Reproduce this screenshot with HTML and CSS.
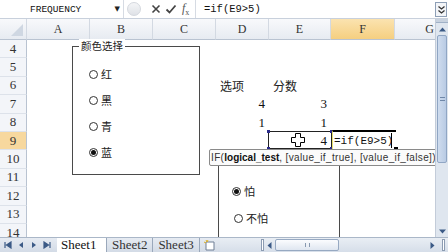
FILE: index.html
```html
<!DOCTYPE html>
<html>
<head>
<meta charset="utf-8">
<link rel="stylesheet" href="styles.css">
</head>
<body>
<div class="app">
  <div class="fbar">
    <div class="namebox"><span class="name">FREQUENCY</span><span class="dd">&#9660;</span></div>
    <div class="fbtns">
      <span class="knob"></span>
      <svg class="ico" width="12" height="12" viewBox="0 0 12 12"><path d="M2.5 2.5 L9.5 9.5 M9.5 2.5 L2.5 9.5" stroke="#444" stroke-width="1.6" fill="none"/></svg>
      <svg class="ico" width="12" height="12" viewBox="0 0 12 12"><path d="M1.5 6.5 L4.5 9.5 L10.5 2.5" stroke="#444" stroke-width="1.8" fill="none"/></svg>
      <span class="fx"><i>f</i><sub>x</sub></span>
    </div>
    <div class="formula">=if(E9&gt;5)</div>
    <div class="expand"><svg width="9" height="10" viewBox="0 0 9 10"><path d="M1.5 1.5 L4.5 4 L7.5 1.5 M1.5 5.5 L4.5 8 L7.5 5.5" stroke="#333" stroke-width="1.3" fill="none"/></svg></div>
  </div>
  <div class="main">
    <div class="sheet">
      <div class="grid">
        <div class="ch corner"><span class="tri"></span></div><div class="ch">A</div><div class="ch">B</div><div class="ch">C</div><div class="ch">D</div><div class="ch">E</div><div class="ch sel">F</div><div class="ch">G</div>
        <div class="rh">4</div><div class="c"></div><div class="c"></div><div class="c"></div><div class="c"></div><div class="c"></div><div class="c"></div><div class="c"></div>
        <div class="rh">5</div><div class="c"></div><div class="c"></div><div class="c"></div><div class="c"></div><div class="c"></div><div class="c"></div><div class="c"></div>
        <div class="rh">6</div><div class="c"></div><div class="c"></div><div class="c"></div><div class="c t">选项</div><div class="c t">分数</div><div class="c"></div><div class="c"></div>
        <div class="rh">7</div><div class="c"></div><div class="c"></div><div class="c"></div><div class="c n">4</div><div class="c n">3</div><div class="c"></div><div class="c"></div>
        <div class="rh">8</div><div class="c"></div><div class="c"></div><div class="c"></div><div class="c n">1</div><div class="c n">1</div><div class="c"></div><div class="c"></div>
        <div class="rh sel">9</div><div class="c"></div><div class="c"></div><div class="c"></div><div class="c"></div><div class="c n">4</div><div class="c"></div><div class="c"></div>
        <div class="rh">10</div><div class="c"></div><div class="c"></div><div class="c"></div><div class="c"></div><div class="c"></div><div class="c"></div><div class="c"></div>
        <div class="rh">11</div><div class="c"></div><div class="c"></div><div class="c"></div><div class="c"></div><div class="c"></div><div class="c"></div><div class="c"></div>
        <div class="rh">12</div><div class="c"></div><div class="c"></div><div class="c"></div><div class="c"></div><div class="c"></div><div class="c"></div><div class="c"></div>
        <div class="rh">13</div><div class="c"></div><div class="c"></div><div class="c"></div><div class="c"></div><div class="c"></div><div class="c"></div><div class="c"></div>
        <div class="rh">14</div><div class="c"></div><div class="c"></div><div class="c"></div><div class="c"></div><div class="c"></div><div class="c"></div><div class="c"></div>
      </div>

      <div class="group g1">
        <span class="glabel">颜色选择</span>
        <div class="radios">
          <div class="radio"><span class="dot"></span>红</div>
          <div class="radio"><span class="dot"></span>黑</div>
          <div class="radio"><span class="dot"></span>青</div>
          <div class="radio on"><span class="dot"></span>蓝</div>
        </div>
      </div>

      <div class="group g2">
        <div class="radios">
          <div class="radio on"><span class="dot"></span>怕</div>
          <div class="radio r2"><span class="dot"></span>不怕</div>
        </div>
      </div>

      <div class="selcell"><i class="h h1"></i><i class="h h2"></i><i class="h h3"></i><i class="h h4"></i></div>
      <div class="editcell">=if(E9&gt;5)<span class="caret"></span><i class="fill"></i></div>
      <svg class="cursor" width="14" height="14" viewBox="0 0 14 14"><path d="M4.5 0.5 H9.5 V4.5 H13.5 V9.5 H9.5 V13.5 H4.5 V9.5 H0.5 V4.5 H4.5 Z" fill="#fff" stroke="#000" stroke-width="1"/></svg>

      <div class="tip">IF(<b>logical_test</b>, [value_if_true], [value_if_false])</div>
    </div>
    <div class="vscroll">
      <div class="vsplit"></div>
      <div class="varrow up"><svg width="7" height="5" viewBox="0 0 7 5"><path d="M0 4.5 L3.5 0.5 L7 4.5 Z" fill="#3b5a86"/></svg></div>
      <div class="vthumb"><span class="grip"></span></div>
      <div class="vtrack"></div>
      <div class="varrow dn"><svg width="7" height="5" viewBox="0 0 7 5"><path d="M0 0.5 L3.5 4.5 L7 0.5 Z" fill="#3b5a86"/></svg></div>
    </div>
  </div>
  <div class="tabbar">
    <div class="nav">
      <svg width="8" height="8" viewBox="0 0 8 8"><path d="M1 1 V7 M7 1 L2.5 4 L7 7 Z" stroke="#3b5a86" stroke-width="1.2" fill="#3b5a86"/></svg>
      <svg width="8" height="8" viewBox="0 0 8 8"><path d="M6 1 L2 4 L6 7 Z" fill="#3b5a86"/></svg>
      <svg width="8" height="8" viewBox="0 0 8 8"><path d="M2 1 L6 4 L2 7 Z" fill="#3b5a86"/></svg>
      <svg width="8" height="8" viewBox="0 0 8 8"><path d="M7 1 V7 M1 1 L5.5 4 L1 7 Z" stroke="#3b5a86" stroke-width="1.2" fill="#3b5a86"/></svg>
    </div>
    <div class="tabs">
      <span class="tab active">Sheet1</span>
      <span class="tab">Sheet2</span>
      <span class="tab">Sheet3</span>
      <span class="tab add"><svg width="14" height="12" viewBox="0 0 14 12"><path d="M3 3 H11 V11 H3 Z" fill="#fff" stroke="#6f7f95"/><path d="M3 1 L4 3 M1 3 L3 4 M5 1 L4 3" stroke="#e0b020" stroke-width="1"/></svg></span>
    </div>
    <div class="hscroll">
      <span class="hsplit"></span>
      <svg class="harr" width="5" height="7" viewBox="0 0 5 7"><path d="M4.5 0 L0.5 3.5 L4.5 7 Z" fill="#3b5a86"/></svg>
      <span class="hthumb"><span class="hgrip"></span></span>
      <span class="htrack"></span>
      <svg class="harr" width="5" height="7" viewBox="0 0 5 7"><path d="M0.5 0 L4.5 3.5 L0.5 7 Z" fill="#3b5a86"/></svg>
      <span class="hsplit r"></span>
    </div>
  </div>
</div>
</body>
</html>
```

FILE: styles.css
```css
* { box-sizing: border-box; }
html, body { margin: 0; padding: 0; background: #fff; }
.app {
  width: 448px; height: 252px; overflow: hidden;
  display: flex; flex-direction: column;
  font-family: "Liberation Serif", "Times New Roman", "DejaVu Serif", serif;
  color: #000;
}
.fbar {
  height: 19px; flex: none; display: flex; align-items: stretch;
  background: #fff; border-bottom: 1px solid #c8d0dc;
}
.namebox {
  width: 124px; display: flex; align-items: center; justify-content: space-between;
  padding: 0 3px 0 30px; border-right: 1px solid #d6dbe3;
}
.name { font-family: "Liberation Mono", monospace; font-size: 9.5px; color: #111; }
.dd { font-size: 7px; color: #222; font-family: "DejaVu Sans", sans-serif; }
.fbtns {
  width: 72px; display: flex; align-items: center; gap: 3px; padding-left: 3px;
  border-right: 1px solid #d6dbe3;
}
.knob {
  width: 14px; height: 14px; border-radius: 50%; border: 1px solid #d4d8de;
  background: linear-gradient(#f4f5f7, #dfe2e7); margin-right: 6px;
}
.ico { display: block; }
.fx { font-family: "Liberation Serif", serif; font-size: 12px; color: #555; margin-left: 2px; }
.fx sub { font-size: 8px; }
.formula {
  flex: 1; display: flex; align-items: center; padding-left: 8px;
  font-family: "Liberation Mono", monospace; font-size: 10.5px; color: #111;
}
.expand {
  width: 12px; margin: 2px 1px 1px 0; border: 1px solid #8e9fb6;
  display: flex; align-items: center; justify-content: center; background: #f3f5f8;
}
.main { flex: 1; display: flex; min-height: 0; }
.sheet { position: relative; width: 435px; overflow: hidden; }
.grid {
  display: grid;
  grid-template-columns: 27px 63px 63px 63px 53px 62px 64px 70px;
  grid-template-rows: 21px repeat(11, 18.4px);
}
.ch {
  background: linear-gradient(#f8f9fb, #e7ebf1);
  border-right: 1px solid #d3d9e2; border-bottom: 1px solid #b9c3d1;
  display: flex; align-items: center; justify-content: center;
  font-family: "Liberation Serif", serif; font-size: 12px; color: #333;
}
.ch.sel { background: linear-gradient(#fbe3b0, #f5cf80); }
.corner { position: relative; }
.tri {
  position: absolute; right: 3px; bottom: 3px; width: 0; height: 0;
  border-left: 12px solid transparent; border-bottom: 12px solid #cfd7e2;
}
.rh {
  background: #f3f5f9; border-right: 1px solid #b9c3d1; border-bottom: 1px solid #dde2ea;
  display: flex; align-items: center; justify-content: center;
  font-family: "Liberation Serif", serif; font-size: 13px; color: #333;
}
.rh.sel { background: #f7d89e; }
.c {
  display: flex; align-items: center; padding: 0 4px;
  font-family: "Liberation Serif", serif; font-size: 13px; color: #111; white-space: nowrap;
}
.c.t { font-family: "Noto Sans CJK SC", sans-serif; font-size: 12px; color: #222; }
.c.n { justify-content: flex-end; }

.group { position: absolute; border: 1px solid #4a4a4a; background: transparent; }
.g1 { left: 72px; top: 27px; width: 128px; height: 129px; }
.g2 { left: 218px; top: 131px; width: 122px; height: 120px; }
.glabel {
  position: absolute; left: 6px; top: -8px; padding: 0 2px; background: #fff;
  font-family: "Noto Sans CJK SC", sans-serif; font-size: 10.5px; color: #222; line-height: 14px;
}
.radios { display: flex; flex-direction: column; }
.g1 .radios { padding: 19px 0 0 16px; gap: 10px; }
.g2 .radios { padding: 32px 0 0 13px; gap: 11px; }
.radio {
  display: flex; align-items: center; height: 16px;
  font-family: "Noto Sans CJK SC", sans-serif; font-size: 11px; color: #222;
}
.r2 { margin-left: 2px; }
.dot {
  width: 9px; height: 9px; border: 1px solid #333; border-radius: 50%;
  margin-right: 3px; background: #fff; display: flex; align-items: center; justify-content: center;
}
.radio.on .dot::after { content: ""; width: 5px; height: 5px; border-radius: 50%; background: #111; }

.selcell {
  position: absolute; left: 268px; top: 112px; width: 64px; height: 18px;
  border: 1px solid #222;
}
.h { position: absolute; width: 3px; height: 3px; background: #2a2a8a; }
.h1 { left: -2px; top: -2px; } .h2 { right: -2px; top: -2px; }
.h3 { left: -2px; bottom: -2px; } .h4 { right: -2px; bottom: -2px; }
.editcell {
  position: absolute; left: 332px; top: 111px; width: 64px; height: 19px;
  border-top: 2px solid #000; border-left: 1px solid #e8e070;
  font-family: "Liberation Mono", monospace; font-size: 11px; color: #111;
  display: flex; align-items: center; padding-left: 1px; background: #fff;
}
.caret { position: absolute; left: 58px; top: 1px; width: 1px; height: 15px; background: #000; }
.fill { position: absolute; right: -2px; bottom: -2px; width: 4px; height: 4px; background: #000; }
.cursor { position: absolute; left: 291px; top: 114px; }

.tip {
  position: absolute; left: 209px; top: 130px; width: 237px; height: 17px;
  background: #fbfbfb; border: 1px solid #8a8a8a; border-radius: 2px;
  font-family: "Liberation Sans", sans-serif; font-size: 10px; letter-spacing: 0.35px; color: #333;
  display: flex; align-items: center; padding-left: 1px; white-space: nowrap;
}
.tip b { color: #111; letter-spacing: 0; }

.vscroll {
  width: 13px; display: flex; flex-direction: column;
  background: #dfe6ef; border-left: 1px solid #c3ccd9;
}
.vsplit { height: 4px; background: #c8d2df; border-bottom: 1px solid #9fb0c6; }
.varrow { height: 12px; display: flex; align-items: center; justify-content: center; }
.vthumb {
  height: 128px; margin: 0 1px; border: 1px solid #90a6c4; border-radius: 2px;
  background: linear-gradient(90deg, #cfdcee, #b9cbe4);
  display: flex; align-items: center; justify-content: center;
}
.grip { width: 5px; height: 4px; border-top: 1px solid #6f87a8; border-bottom: 1px solid #6f87a8; }
.vtrack { flex: 1; }

.tabbar {
  height: 15px; flex: none; display: flex; align-items: center;
  background: linear-gradient(#e6ebf2, #d3dbe6); border-top: 1px solid #aab7c8;
}
.nav { width: 57px; display: flex; gap: 5px; padding-left: 4px; align-items: center; }
.nav svg { display: block; }
.tabs { display: flex; align-items: stretch; height: 100%; width: 163px; }
.tab {
  font-family: "Liberation Serif", serif;
  font-size: 13px; color: #333; padding: 0 5px; display: flex; align-items: center;
  border-right: 1px solid #9aa8bb;
}
.tab.active { background: #fff; color: #111; padding-left: 4px; width: 50px; }
.tab.add { border-right: none; padding: 0 3px; }
.hscroll {
  flex: 1; height: 100%; display: flex; align-items: center; gap: 3px;
  background: linear-gradient(#e9eef4, #d6dee9); padding: 0 3px;
}
.hsplit { width: 3px; height: 12px; border: 1px solid #8c9cb2; background: #fff; margin-left: 38px; }
.hsplit.r { margin-left: 4px; }
.harr { display: block; }
.hthumb {
  width: 64px; height: 12px; border: 1px solid #97a9c2; border-radius: 2px;
  background: linear-gradient(#fbfcfe, #dfe6f0); display: flex; align-items: center; justify-content: center;
}
.hgrip { width: 5px; height: 4px; border-left: 1px solid #8899b0; border-right: 1px solid #8899b0; }
.htrack { flex: 1; }
```
